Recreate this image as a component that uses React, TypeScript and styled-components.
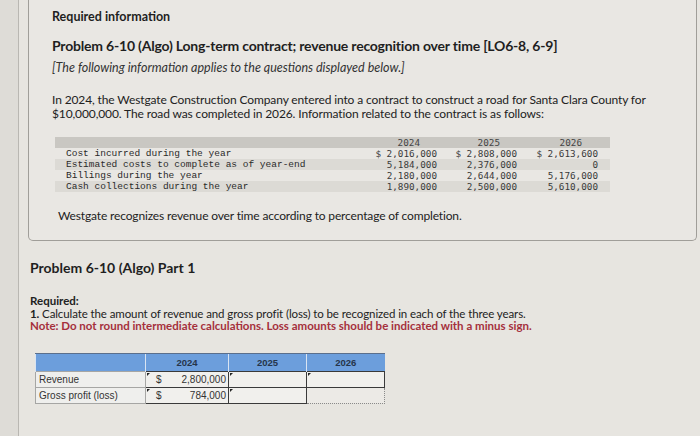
import React from "react";
import styled, { createGlobalStyle } from "styled-components";

const GlobalStyle = createGlobalStyle`
  html, body { margin: 0; padding: 0; }
  body {
    background: #e7e5e0;
    font-family: Lato, "Liberation Sans", Arial, sans-serif;
    color: #222;
    width: 700px;
    height: 436px;
    overflow: hidden;
  }
`;

const Page = styled.div`
  display: flex;
  width: 700px;
  height: 436px;
  overflow: hidden;
`;

const LeftStrip = styled.div`
  width: 18px;
  flex: none;
  background: #dedcd7;
  border-right: 1px solid #b9b7b2;
`;

const Main = styled.div`
  flex: 1;
  padding: 0 3px 0 9px;
  display: flex;
  flex-direction: column;
`;

const InfoBox = styled.div`
  margin-top: -4px;
  border: 1px solid #a09e99;
  border-top-color: #8d8b87;
  border-radius: 0 0 5px 5px;
  padding: 12px 10px 18px 23px;
  height: 245px;
  box-sizing: border-box;
  background: #e9e7e3;
`;

const SmallHead = styled.div`
  font-weight: 700;
  font-size: 12.5px;
  line-height: 15px;
  color: #1f1f1f;
`;

const Title = styled.div`
  margin-top: 13px;
  font-weight: 700;
  font-size: 14px;
  line-height: 17px;
  color: #1f1f1f;
  letter-spacing: -0.2px;
`;

const Italic = styled.div`
  margin-top: 6px;
  font-style: italic;
  font-size: 12.5px;
  line-height: 15px;
  color: #333;
`;

const Para = styled.p`
  margin: 18px 0 0;
  font-size: 12px;
  letter-spacing: -0.12px;
  line-height: 14px;
  color: #222;
  white-space: nowrap;
`;

const MonoTable = styled.table`
  margin: 16px 0 0 3px;
  border-collapse: collapse;
  table-layout: fixed;
  width: 555px;
  color: #333;
`;

const MonoHeadRow = styled.tr`
  background: #c9c7c2;
`;

const MonoHeadCell = styled.th<{ $w: number; $pr: number }>`
  box-sizing: border-box;
  width: ${(p) => p.$w}px;
  padding: 0 ${(p) => p.$pr}px 0 0;
  height: 11px;
  font-family: "DejaVu Sans Mono", "Liberation Mono", monospace;
  font-weight: 400;
  font-size: 9.3px;
  line-height: 11px;
  text-align: right;
  color: #444;
`;

const MonoRow = styled.tr<{ $shade: boolean }>`
  background: ${(p) => (p.$shade ? "#dcdad5" : "transparent")};
`;

const MonoLabel = styled.td`
  padding: 0 0 0 11px;
  height: 11px;
  font-family: "Liberation Mono", "Courier New", monospace;
  font-size: 9.5px;
  line-height: 11px;
  white-space: nowrap;
  color: #2a2a2a;
`;

const MonoNum = styled.td<{ $pr: number }>`
  box-sizing: border-box;
  padding: 0 ${(p) => p.$pr}px 0 0;
  font-family: "DejaVu Sans Mono", "Liberation Mono", monospace;
  font-size: 9.3px;
  line-height: 11px;
  text-align: right;
  white-space: nowrap;
  color: #3a3a3a;
`;

const Note = styled.div`
  margin-top: 16px;
  margin-left: 6px;
  font-size: 12px;
  letter-spacing: -0.15px;
  line-height: 15px;
  color: #222;
`;

const PartTitle = styled.div`
  margin: 19px 0 0 2px;
  font-weight: 700;
  font-size: 14px;
  line-height: 16px;
  color: #1f1f1f;
`;

const Required = styled.div`
  margin: 19px 0 0 2px;
  font-size: 11.5px;
  line-height: 12.5px;
  color: #222;
`;

const Bold = styled.div`
  font-weight: 700;
`;

const Plain = styled.div`
  letter-spacing: -0.1px;
`;

const Red = styled.div`
  font-weight: 700;
  color: #a5303c;
`;

const AnswerTable = styled.table`
  margin: 20px 0 0 7px;
  border-collapse: collapse;
  table-layout: fixed;
  width: 350px;
  font-family: "Liberation Sans", Arial, sans-serif;
  font-size: 10px;
`;

const BlueHead = styled.th<{ $w: number }>`
  box-sizing: border-box;
  width: ${(p) => p.$w}px;
  height: 18px;
  padding: 0;
  background: #6c9edc;
  border-top: 1px solid #5b6f8c;
  border-left: 1px solid #d9e4f2;
  font-weight: 700;
  font-size: 9.5px;
  color: #26354a;
  text-align: center;
  vertical-align: middle;
`;

const LabelCell = styled.td`
  height: 15px;
  padding: 0 0 0 3px;
  background: #efefed;
  border: 1px solid #a6a6a4;
  color: #333;
  font-size: 10px;
  white-space: nowrap;
`;

const InputCell = styled.td<{ $dotted?: boolean }>`
  position: relative;
  padding: 0 2px 0 0;
  background: ${(p) => (p.$dotted ? "#eceae6" : "#f1f0ed")};
  border: ${(p) => (p.$dotted ? "1px dotted #8a8a8a" : "1px solid #3a3a3a")};
  color: #333;
  font-size: 10px;
`;

const Marker = styled.span`
  position: absolute;
  left: 1px;
  top: 1px;
  width: 0;
  height: 0;
  border-top: 3px solid #222;
  border-right: 3px solid transparent;
`;

const Money = styled.div`
  display: flex;
  justify-content: space-between;
  padding-left: 10px;
`;

const costRows = [
  { label: "Cost incurred during the year", v: ["$ 2,016,000", "$ 2,808,000", "$ 2,613,600"] },
  { label: "Estimated costs to complete as of year-end", v: ["5,184,000", "2,376,000", "0"] },
  { label: "Billings during the year", v: ["2,180,000", "2,644,000", "5,176,000"] },
  { label: "Cash collections during the year", v: ["1,890,000", "2,500,000", "5,610,000"] },
];

const cols = [
  { w: 317, pr: 0, head: "", npr: 0 },
  { w: 68, pr: 20, head: "2024", npr: 3 },
  { w: 80, pr: 20, head: "2025", npr: 3 },
  { w: 90, pr: 28, head: "2026", npr: 12 },
];

export default function App() {
  return (
    <>
      <GlobalStyle />
      <Page>
        <LeftStrip />
        <Main>
          <InfoBox>
            <SmallHead>Required information</SmallHead>
            <Title>Problem 6-10 (Algo) Long-term contract; revenue recognition over time [LO6-8, 6-9]</Title>
            <Italic>[The following information applies to the questions displayed below.]</Italic>
            <Para>
              In 2024, the Westgate Construction Company entered into a contract to construct a road for Santa Clara County for
              <br />
              $10,000,000. The road was completed in 2026. Information related to the contract is as follows:
            </Para>
            <MonoTable>
              <thead>
                <MonoHeadRow>
                  {cols.map((c, i) => (
                    <MonoHeadCell key={i} $w={c.w} $pr={c.pr}>
                      {c.head}
                    </MonoHeadCell>
                  ))}
                </MonoHeadRow>
              </thead>
              <tbody>
                {costRows.map((r, i) => (
                  <MonoRow key={r.label} $shade={i % 2 === 1}>
                    <MonoLabel>{r.label}</MonoLabel>
                    {r.v.map((v, j) => (
                      <MonoNum key={j} $pr={cols[j + 1].npr}>
                        {v}
                      </MonoNum>
                    ))}
                  </MonoRow>
                ))}
              </tbody>
            </MonoTable>
            <Note>Westgate recognizes revenue over time according to percentage of completion.</Note>
          </InfoBox>

          <PartTitle>Problem 6-10 (Algo) Part 1</PartTitle>
          <Required>
            <Bold>Required:</Bold>
            <Plain>
              <b>1.</b> Calculate the amount of revenue and gross profit (loss) to be recognized in each of the three years.
            </Plain>
            <Red>Note: Do not round intermediate calculations. Loss amounts should be indicated with a minus sign.</Red>
          </Required>

          <AnswerTable>
            <thead>
              <tr>
                <BlueHead $w={110}></BlueHead>
                <BlueHead $w={83}>2024</BlueHead>
                <BlueHead $w={78}>2025</BlueHead>
                <BlueHead $w={78}>2026</BlueHead>
              </tr>
            </thead>
            <tbody>
              <tr>
                <LabelCell>Revenue</LabelCell>
                <InputCell>
                  <Marker />
                  <Money>
                    <span>$</span>
                    <span>2,800,000</span>
                  </Money>
                </InputCell>
                <InputCell>
                  <Marker />
                </InputCell>
                <InputCell>
                  <Marker />
                </InputCell>
              </tr>
              <tr>
                <LabelCell>Gross profit (loss)</LabelCell>
                <InputCell>
                  <Marker />
                  <Money>
                    <span>$</span>
                    <span>784,000</span>
                  </Money>
                </InputCell>
                <InputCell>
                  <Marker />
                </InputCell>
                <InputCell $dotted />
              </tr>
            </tbody>
          </AnswerTable>
        </Main>
      </Page>
    </>
  );
}
